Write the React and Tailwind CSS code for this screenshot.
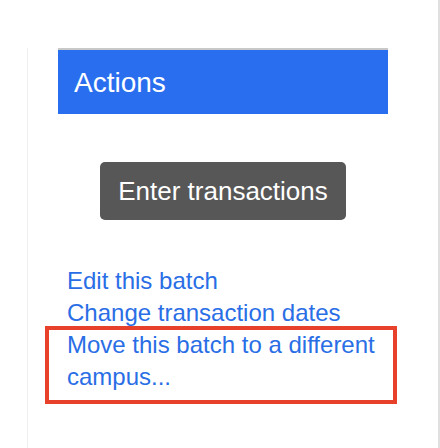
export default function App() {
  return (
    <div
      className="relative flex h-[448px] w-[440px] overflow-hidden bg-white"
      style={{ fontFamily: '"Liberation Sans", Arial, sans-serif' }}
    >
      <div className="flex-1 pl-[27px] pt-[48px]">
        <div className="h-full border-l border-[#f0f0f0] pl-[30px]">
          <div className="w-[330px]">
            <div className="flex h-[66px] items-center border-t-2 border-[#c8c8c8] bg-[#2a6ef0] pl-[16px] pt-[1px]">
              <span className="text-[28px] leading-[32px] text-white">Actions</span>
            </div>
            <div className="mt-[48px] flex justify-center">
              <button className="flex h-[58px] w-[246px] items-center justify-center rounded-[5px] bg-[#575757] text-[26px] leading-[30px] text-white">
                Enter transactions
              </button>
            </div>
            <div className="mt-[45px] flex flex-col pl-[9px] text-[24px] leading-[32px] text-[#2a6ee6]">
              <a>Edit this batch</a>
              <a>Change transaction dates</a>
              <a className="w-[320px]">Move this batch to a different campus...</a>
            </div>
          </div>
        </div>
      </div>
      <div className="h-full w-[2px] bg-[#e0e0e0]" />
      <div className="absolute left-[45px] top-[326px] h-[78px] w-[352px] border-4 border-[#e8412b]" />
    </div>
  );
}
